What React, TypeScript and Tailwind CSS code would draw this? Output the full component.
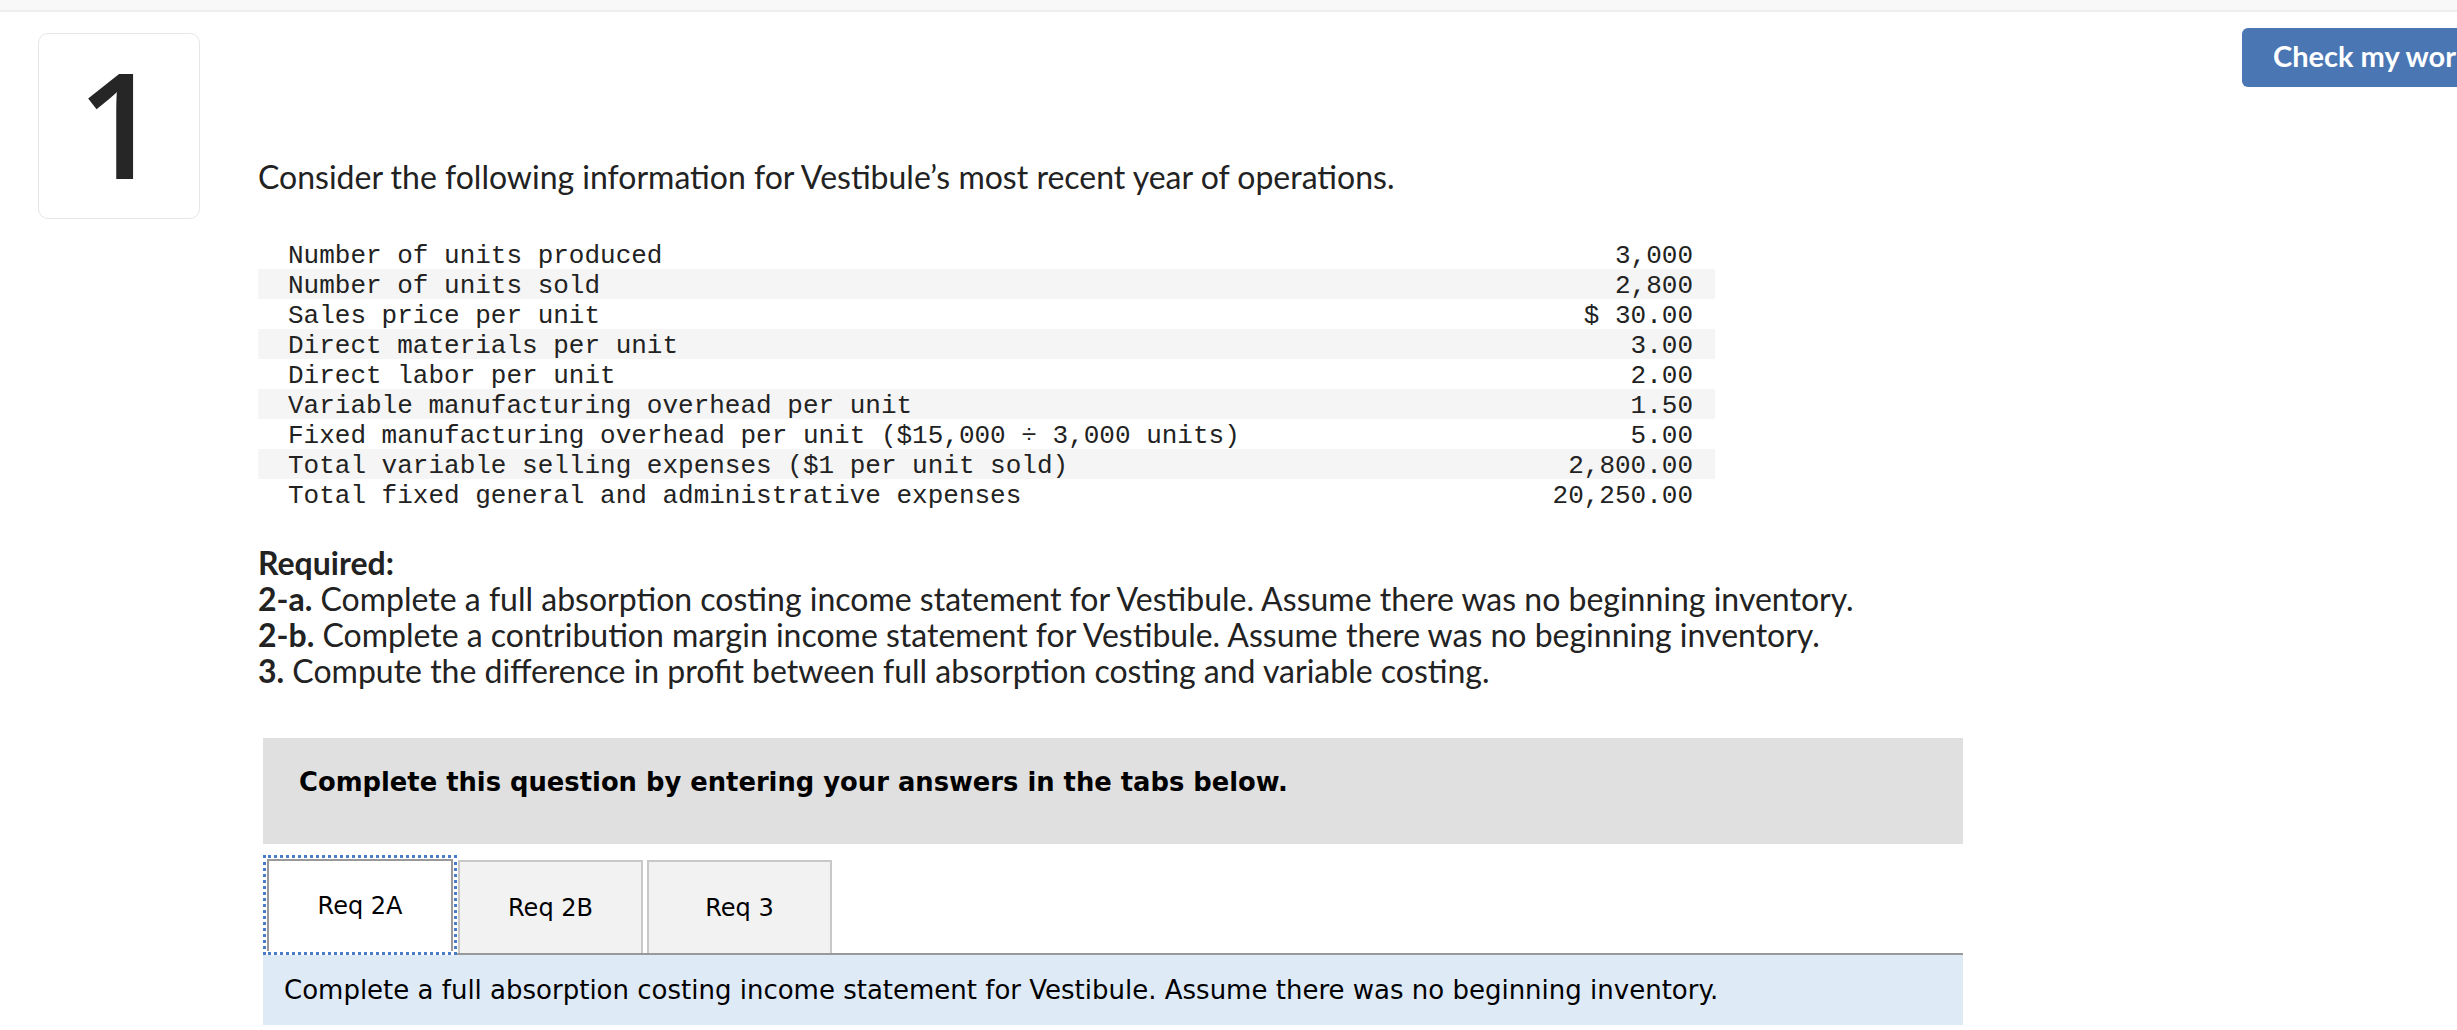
import React from "react";

const rows: [string, string][] = [
  ["Number of units produced", "3,000"],
  ["Number of units sold", "2,800"],
  ["Sales price per unit", "$ 30.00"],
  ["Direct materials per unit", "3.00"],
  ["Direct labor per unit", "2.00"],
  ["Variable manufacturing overhead per unit", "1.50"],
  ["Fixed manufacturing overhead per unit ($15,000 ÷ 3,000 units)", "5.00"],
  ["Total variable selling expenses ($1 per unit sold)", "2,800.00"],
  ["Total fixed general and administrative expenses", "20,250.00"],
];

export default function App() {
  return (
    <div className="h-screen w-screen overflow-hidden bg-white text-[#222222]">
      <div className="h-[12px] bg-[#f8f8f8] border-b-2 border-[#eeeeee]" />
      <div className="flex">
        <div className="ml-[38px] mt-[21px] w-[162px] h-[186px] shrink-0 rounded-[10px] border border-[#e6e6e6] flex items-center justify-center font-['Open_Sans',sans-serif] font-semibold text-[146px] leading-none text-[#262626]">
          <span className="-mt-[6px]">1</span>
        </div>
        <div className="ml-[58px] flex-1 pt-[146px] min-w-0">
          <p className="font-['Lato',sans-serif] text-[32px] leading-[38px] whitespace-nowrap">
            Consider the following information for Vestibule’s most recent year of operations.
          </p>
          <div className="mt-[43px] w-[1457px] font-['Liberation_Mono',monospace] text-[26px] text-[#222222]">
            {rows.map(([label, value], i) => (
              <div
                key={label}
                className={
                  "flex justify-between h-[30px] leading-[30px] pt-[2px] pl-[30px] pr-[22px] whitespace-pre " +
                  (i % 2 === 1 ? "bg-[#f5f5f5]" : "bg-white")
                }
              >
                <span>{label}</span>
                <span>{value}</span>
              </div>
            ))}
          </div>
          <div className="mt-[36px] font-['Lato',sans-serif] text-[32px] leading-[36px] whitespace-nowrap">
            <p className="font-bold">Required:</p>
            <p>
              <span className="font-bold">2-a.</span> Complete a full absorption costing income statement for Vestibule. Assume there was no beginning inventory.
            </p>
            <p>
              <span className="font-bold">2-b.</span> Complete a contribution margin income statement for Vestibule. Assume there was no beginning inventory.
            </p>
            <p>
              <span className="font-bold">3.</span> Compute the difference in profit between full absorption costing and variable costing.
            </p>
          </div>
          <div className="mt-[49px] ml-[5px] w-[1700px] h-[106px] bg-[#e0e0e0] pt-[29px] pl-[36px] font-['DejaVu_Sans',sans-serif] font-bold text-[25.8px] leading-[30px] text-black whitespace-nowrap">
            Complete this question by entering your answers in the tabs below.
          </div>
          <div className="mt-[11px] ml-[5px] w-[1700px] flex items-end border-b-2 border-[#999999] font-['DejaVu_Sans',sans-serif] text-[24px] text-black">
            <div className="-mb-[2px] w-[194px] h-[100px] border-[3px] border-dotted border-[#4a7cc7] p-[1px] bg-white">
              <div className="h-full border-2 border-b-0 border-[#999999] bg-white flex items-center justify-center">
                Req 2A
              </div>
            </div>
            <div className="ml-[1px] w-[185px] h-[93px] border-2 border-b-0 border-[#c8c8c8] bg-[#f2f2f2] flex items-center justify-center">
              Req 2B
            </div>
            <div className="ml-[4px] w-[185px] h-[93px] border-2 border-b-0 border-[#c8c8c8] bg-[#f2f2f2] flex items-center justify-center">
              Req 3
            </div>
          </div>
          <div className="ml-[5px] w-[1700px] h-[70px] bg-[#dfeaf7] pl-[21px] flex items-center font-['DejaVu_Sans',sans-serif] text-[26px] text-black whitespace-nowrap">
            Complete a full absorption costing income statement for Vestibule. Assume there was no beginning inventory.
          </div>
        </div>
        <div className="shrink-0 -mr-[37px] mt-[16px] w-[252px] h-[59px] rounded-[6px] bg-[#4a76b4] text-white font-['Lato',sans-serif] font-bold text-[29px] pl-[31px] pb-[4px] flex items-center whitespace-nowrap overflow-hidden">
          Check my work
        </div>
      </div>
    </div>
  );
}
